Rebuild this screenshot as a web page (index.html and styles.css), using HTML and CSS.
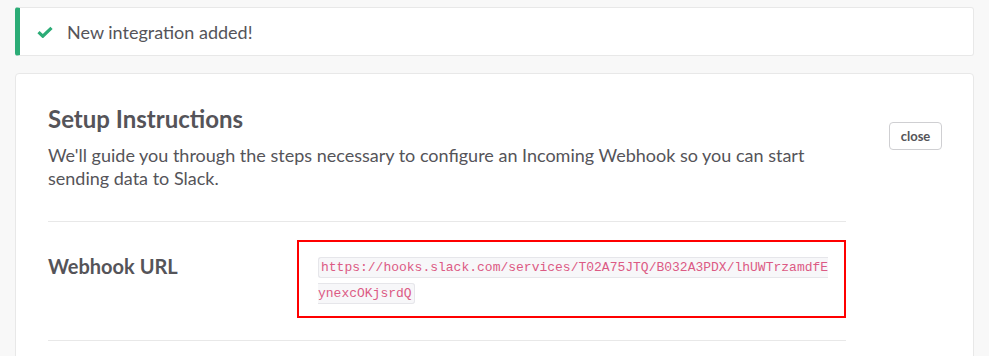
FILE: index.html
```html
<!DOCTYPE html>
<html>
<head>
<meta charset="utf-8">
<link rel="stylesheet" href="styles.css">
</head>
<body>
<div class="alert">
  <svg class="check" width="16" height="12" viewBox="0 0 16 12"><path d="M1.5 6.2 L5.8 10.2 L14.5 1.8" fill="none" stroke="#2bac76" stroke-width="3.2" stroke-linecap="butt" stroke-linejoin="miter"/></svg>
  <span class="alert-text">New integration added!</span>
</div>
<div class="card">
  <div class="main">
    <h2 class="title">Setup Instructions</h2>
    <p class="lead">We'll guide you through the steps necessary to configure an Incoming Webhook so you can start sending data to Slack.</p>
    <div class="row">
      <div class="label">Webhook URL</div>
      <div class="value"><code class="url">https://hooks.slack.com/services/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</code></div>
    </div>
  </div>
  <div class="side">
    <button class="close">close</button>
  </div>
</div>
</body>
</html>
```
FILE: styles.css
```css
html, body {
  margin: 0;
  padding: 0;
  background: #f8f8f8;
}
body {
  padding: 7px 15px 0 15px;
  font-family: Lato, "Noto Sans", sans-serif;
  color: #555459;
}
.alert {
  height: 47px;
  background: #fff;
  border: 1px solid #e8e8e8;
  border-left: 5px solid #2bac76;
  border-radius: 3px;
  display: flex;
  align-items: center;
  padding-left: 17px;
}
.check {
  margin-right: 14px;
  margin-top: 1px;
}
.alert-text {
  font-size: 18px;
  color: #555459;
}
.card {
  margin-top: 17px;
  background: #fff;
  border: 1px solid #e8e8e8;
  border-radius: 4px;
  display: flex;
  padding: 0 31px 0 32px;
  height: 290px;
}
.main {
  width: 798px;
  flex-shrink: 0;
  padding-top: 27px;
}
.title {
  margin: 0;
  font-size: 24px;
  font-weight: 700;
  line-height: 36px;
}
.lead {
  margin: 7px 0 0 0;
  font-size: 18px;
  line-height: 23px;
  padding-bottom: 31px;
  border-bottom: 1px solid #e8e8e8;
}
.row {
  display: flex;
  padding: 18px 0 22px 0;
  border-bottom: 1px solid #e8e8e8;
}
.label {
  width: 249px;
  flex-shrink: 0;
  font-size: 20px;
  font-weight: 700;
  padding-top: 14px;
}
.value {
  flex: 1;
  border: 2px solid #ff0000;
  padding: 13px 10px 9px 19px;
  font-family: "Liberation Mono", monospace;
  font-size: 13px;
  line-height: 26px;
}
.url {
  font-family: "Liberation Mono", monospace;
  font-size: 13px;
  color: #dc5a84;
  background: #f7f7f9;
  border: 1px solid #e6e6ea;
  border-radius: 3px;
  padding: 2px 2px;
  word-break: break-all;
}
.side {
  flex: 1;
  display: flex;
  justify-content: flex-end;
  align-items: flex-start;
  padding-top: 48px;
}
.close {
  font-family: Lato, sans-serif;
  font-size: 13px;
  font-weight: 700;
  color: #555459;
  background: #fff;
  border: 1px solid #cfcfd2;
  border-radius: 4px;
  width: 53px;
  height: 28px;
  padding: 0;
}
```
